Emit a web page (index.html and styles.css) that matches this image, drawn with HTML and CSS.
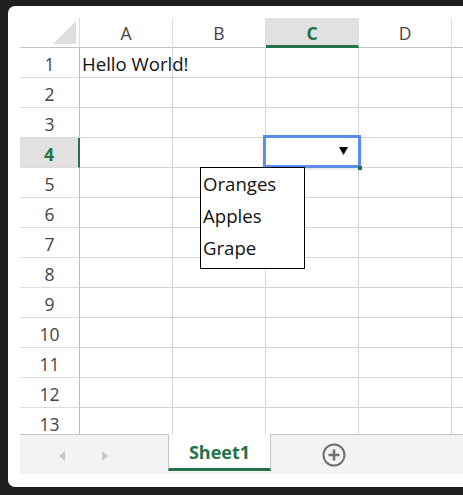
FILE: index.html
```html
<!DOCTYPE html>
<html>
<head>
<meta charset="utf-8">
<link rel="stylesheet" href="styles.css">
</head>
<body>
<div class="panel">
  <div class="sheet">
    <div class="grid">
      <div class="corner"><div class="tri"></div></div>
      <div class="ch">A</div><div class="ch">B</div><div class="ch sel">C</div><div class="ch">D</div><div class="ch"></div>

      <div class="rh">1</div><div class="c text">Hello World!</div><div class="c"></div><div class="c"></div><div class="c"></div><div class="c"></div>
      <div class="rh">2</div><div class="c"></div><div class="c"></div><div class="c"></div><div class="c"></div><div class="c"></div>
      <div class="rh">3</div><div class="c"></div><div class="c"></div><div class="c"></div><div class="c"></div><div class="c"></div>
      <div class="rh sel">4</div><div class="c"></div><div class="c"></div><div class="c"></div><div class="c"></div><div class="c"></div>
      <div class="rh">5</div><div class="c"></div><div class="c"></div><div class="c"></div><div class="c"></div><div class="c"></div>
      <div class="rh">6</div><div class="c"></div><div class="c"></div><div class="c"></div><div class="c"></div><div class="c"></div>
      <div class="rh">7</div><div class="c"></div><div class="c"></div><div class="c"></div><div class="c"></div><div class="c"></div>
      <div class="rh">8</div><div class="c"></div><div class="c"></div><div class="c"></div><div class="c"></div><div class="c"></div>
      <div class="rh">9</div><div class="c"></div><div class="c"></div><div class="c"></div><div class="c"></div><div class="c"></div>
      <div class="rh">10</div><div class="c"></div><div class="c"></div><div class="c"></div><div class="c"></div><div class="c"></div>
      <div class="rh">11</div><div class="c"></div><div class="c"></div><div class="c"></div><div class="c"></div><div class="c"></div>
      <div class="rh">12</div><div class="c"></div><div class="c"></div><div class="c"></div><div class="c"></div><div class="c"></div>
      <div class="rh">13</div><div class="c"></div><div class="c"></div><div class="c"></div><div class="c"></div><div class="c"></div>
    </div>
    <div class="selbox">
      <svg class="arrow" width="9" height="8" viewBox="0 0 9 8"><polygon points="0,0 9,0 4.5,8" fill="#000"/></svg>
      <div class="handle"></div>
    </div>
    <div class="dropdown">
      <div class="opt">Oranges</div>
      <div class="opt">Apples</div>
      <div class="opt">Grape</div>
    </div>
  </div>
  <div class="tabbar">
    <div class="nav">
      <svg width="6" height="10" viewBox="0 0 6 10"><polygon points="6,0 6,10 0,5" fill="#c8c8c8"/></svg>
      <svg width="6" height="10" viewBox="0 0 6 10"><polygon points="0,0 0,10 6,5" fill="#c8c8c8"/></svg>
    </div>
    <div class="tab">Sheet1</div>
    <svg class="add" width="26" height="26" viewBox="0 0 26 26">
      <circle cx="13" cy="13" r="10.5" fill="none" stroke="#707070" stroke-width="2"/>
      <path d="M13 7.5v11M7.5 13h11" stroke="#707070" stroke-width="2.6"/>
    </svg>
  </div>
</div>
</body>
</html>
```

FILE: styles.css
```css
html, body {
  margin: 0;
  padding: 0;
  background: #1f1f1f;
  overflow: hidden;
  width: 463px;
  height: 495px;
}

.panel {
  margin: 6px 0 0 8px;
  width: 455px;
  height: 481px;
  background: #fff;
  border-radius: 7px 0 0 7px;
  box-sizing: border-box;
  padding: 12px 0 0 12px;
  font-family: "Open Sans", "Noto Sans", sans-serif;
}

.sheet {
  position: relative;
  height: 416px;
  overflow: hidden;
}

.grid {
  display: grid;
  grid-template-columns: 60px repeat(5, 93px);
  grid-auto-rows: 30px;
}

.grid > div {
  box-sizing: border-box;
  border-right: 1px solid #d4d4d4;
  border-bottom: 1px solid #d4d4d4;
}

.corner {
  display: flex;
  justify-content: flex-end;
  align-items: flex-end;
  padding: 0 3px 3px 0;
  border-bottom-color: #c4c4c4 !important;
  border-right-color: #dcdcdc !important;
}

.tri {
  width: 23px;
  height: 23px;
  background: #dedede;
  clip-path: polygon(100% 0, 100% 100%, 0 100%);
}

.ch {
  display: flex;
  align-items: center;
  justify-content: center;
  font-size: 17.5px;
  color: #444;
  border-bottom-color: #c4c4c4 !important;
  border-right-color: #e0e0e0 !important;
  padding-top: 1px;
}

.ch.sel {
  background: #e1e1e1;
  color: #217346;
  font-weight: 700;
  border-bottom: 3px solid #217346 !important;
  padding-top: 3px;
}

.rh {
  display: flex;
  align-items: center;
  justify-content: center;
  font-size: 17.5px;
  color: #444;
  border-right-color: #bdbdbd !important;
  border-bottom-color: #dcdcdc !important;
  padding-top: 2px;
}

.rh.sel {
  background: #e1e1e1;
  color: #217346;
  font-weight: 700;
  border-right: 2px solid #217346 !important;
}

.c.text {
  font-size: 18.6px;
  color: #111;
  padding: 3px 0 0 2px;
  white-space: nowrap;
  overflow: visible;
  line-height: 26px;
}

.selbox {
  position: absolute;
  left: 243px;
  top: 117px;
  width: 98px;
  height: 33px;
  box-sizing: border-box;
  border: 3px solid #5b8def;
  background: #fff;
  box-shadow: 0 1px 3px rgba(0,0,0,0.15);
}

.arrow {
  position: absolute;
  right: 10px;
  top: 9px;
}

.handle {
  position: absolute;
  right: -4px;
  bottom: -5px;
  width: 4px;
  height: 4px;
  background: #217346;
}

.dropdown {
  position: absolute;
  left: 180px;
  top: 149px;
  width: 105px;
  height: 102px;
  box-sizing: border-box;
  border: 1px solid #000;
  background: #fff;
}

.opt {
  height: 32px;
  line-height: 31px;
  padding-left: 2px;
  font-size: 18.6px;
  color: #111;
}

.tabbar {
  display: flex;
  align-items: center;
  height: 40px;
  box-sizing: border-box;
  background: #f3f3f3;
  border-top: 1px solid #c6c6c6;
}

.nav {
  width: 148px;
  display: flex;
  align-items: center;
  gap: 37px;
  padding: 3px 0 0 39px;
  box-sizing: border-box;
}

.tab {
  align-self: flex-start;
  margin-top: -1px;
  width: 103px;
  height: 37px;
  box-sizing: border-box;
  background: #fff;
  border-left: 1px solid #c6c6c6;
  border-right: 1px solid #c6c6c6;
  border-bottom: 3px solid #217346;
  color: #217346;
  font-weight: 700;
  font-size: 18px;
  display: flex;
  align-items: center;
  justify-content: center;
  padding-top: 1px;
}

.add {
  margin-left: 50px;
  margin-top: 1px;
}
```
